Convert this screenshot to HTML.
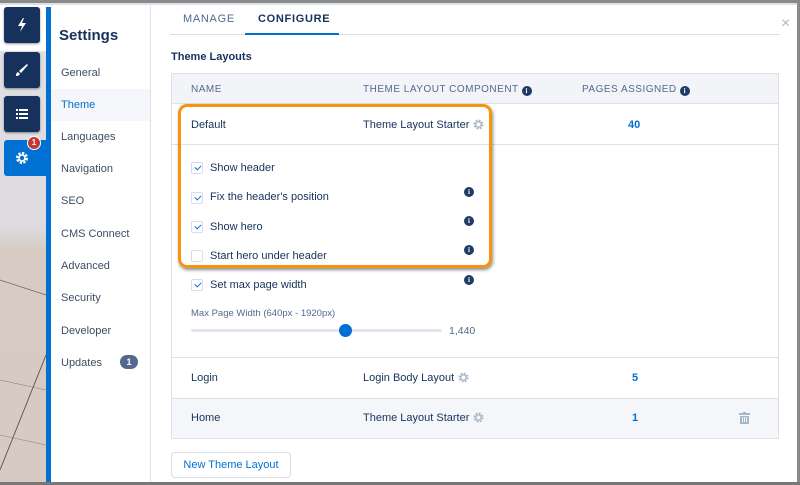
<!DOCTYPE html>
<html><head><style>
*{margin:0;padding:0;box-sizing:border-box}
body{width:800px;height:485px;overflow:hidden;background:#fff;font-family:"Liberation Sans",sans-serif;position:relative;color:#16325c}
.abs{position:absolute}
.lb{left:0;top:0;width:46px;height:485px;background:linear-gradient(#fff 0,#fff 50px,#e0dfe3 52px,#dddbe0 228px,#d7cbc3 250px,#d6cac2 485px)}
.rail{position:absolute;left:4px;width:36px;height:36px;border-radius:3px;background:#16325c;box-shadow:0 1px 2px rgba(0,0,0,.4)}
.rail svg{position:absolute;left:10px;top:10px}
.nav{left:51px;top:5px;width:100px;height:478px;background:#fff;border-right:1px solid #dde2ea}
.nav div{position:absolute;left:10px;font-size:11px;color:#3e4d63}
.main{left:152px;top:5px;width:645px;height:478px;background:#fff}
.th{font-size:10px;letter-spacing:.5px;color:#54698d}
.i{display:inline-block;width:10px;height:10px;border-radius:50%;background:#1f3b66;color:#fff;font-size:7px;line-height:10px;text-align:center;font-weight:bold;vertical-align:-1px;font-family:"Liberation Serif",serif}
.cb{position:absolute;width:12px;height:12px;border:1px solid #d8dde6;border-radius:2px;background:#fff}
.cb:after{content:"";position:absolute;left:3px;top:2px;width:5px;height:3px;border-left:1.5px solid #0070d2;border-bottom:1.5px solid #0070d2;transform:rotate(-45deg)}
.cb.n:after{display:none}
.t{position:absolute;font-size:11px;color:#16325c}
.g{vertical-align:-2px;margin-left:4px}
</style></head><body>
<div class="abs lb"></div>
<svg class="abs" style="left:0;top:230px" width="46" height="255"><line x1="0" y1="50" x2="46" y2="65" stroke="#6b6460" stroke-width=".8"/><line x1="0" y1="150" x2="46" y2="160" stroke="#8a807a" stroke-width=".6"/><line x1="0" y1="205" x2="46" y2="215" stroke="#8a807a" stroke-width=".6"/><line x1="46" y1="125" x2="0" y2="240" stroke="#5a534f" stroke-width=".9"/></svg>
<div class="abs" style="left:0;top:0;width:800px;height:3px;background:#8a8a8a"></div>
<div class="abs" style="left:0;top:3px;width:800px;height:2px;background:#dde2ea"></div>
<div class="abs" style="left:797px;top:0;width:3px;height:485px;background:#8a8a8a"></div>
<div class="abs" style="left:46px;top:7px;width:5px;height:476px;background:#0070d2"></div>
<div class="rail" style="top:7px"><svg width="16" height="16"><path d="M9 1L4 9h4l-2 6 6-9H8l2-5z" fill="#fff"/></svg></div>
<div class="rail" style="top:52px"><svg width="16" height="16"><path d="M13 2l1 1-7 8-2-2z M4 10l2 2c-1 2-3 2-4 2 0-1 0-3 2-4z" fill="#fff"/></svg></div>
<div class="rail" style="top:96px"><svg width="16" height="16"><g fill="#fff"><rect x="2" y="3" width="2" height="2"/><rect x="5" y="3" width="9" height="2"/><rect x="2" y="7" width="2" height="2"/><rect x="5" y="7" width="9" height="2"/><rect x="2" y="11" width="2" height="2"/><rect x="5" y="11" width="9" height="2"/></g></svg></div>
<div class="rail" style="top:140px;width:42px;height:36px;background:#0070d2;border-radius:3px 0 0 3px;box-shadow:none"><svg width="16" height="16"><circle cx="8" cy="8" r="4.5" fill="none" stroke="#fff" stroke-width="3" stroke-dasharray="2.2 1.3"/><circle cx="8" cy="8" r="3" fill="none" stroke="#fff" stroke-width="1.6"/></svg></div>
<div class="abs" style="left:27px;top:136px;width:14px;height:14px;border-radius:50%;background:#c23934;color:#fff;font-size:8px;font-weight:bold;text-align:center;line-height:12px;border:1px solid #fff">1</div>
<div class="abs nav">
<div style="top:22px;left:8px;font-size:15px;font-weight:bold;color:#16325c">Settings</div>
<div style="top:62px">General</div>
<div style="left:0;top:84px;width:99px;height:32px;background:#f4f6f9"></div>
<div style="top:94px;color:#0070d2">Theme</div>
<div style="top:126px">Languages</div>
<div style="top:158px">Navigation</div>
<div style="top:190px">SEO</div>
<div style="top:223px">CMS Connect</div>
<div style="top:255px">Advanced</div>
<div style="top:287px">Security</div>
<div style="top:320px">Developer</div>
<div style="top:352px">Updates</div>
<div style="left:69px;top:350px;width:18px;height:14px;border-radius:7px;background:#54698d;color:#fff;font-size:9px;font-weight:bold;text-align:center;line-height:14px">1</div>
</div>
<div class="abs main"></div>
<div class="abs" style="left:0;top:482px;width:800px;height:3px;background:#777"></div>
<div class="abs" style="left:170px;top:34px;width:610px;height:1px;background:#d8dde6"></div>
<div class="abs" style="left:245px;top:33px;width:94px;height:2px;background:#0070d2"></div>
<div class="abs" style="left:183px;top:13px;font-size:11px;letter-spacing:.7px;color:#54698d">MANAGE</div>
<div class="abs" style="left:258px;top:13px;font-size:11px;letter-spacing:.7px;color:#16325c;font-weight:bold">CONFIGURE</div>
<div class="abs" style="left:781px;top:15px;font-size:16px;color:#a8b7c7">×</div>
<div class="abs" style="left:171px;top:51px;font-size:11px;font-weight:bold;color:#16325c">Theme Layouts</div>
<div class="abs" style="left:171px;top:73px;width:608px;height:366px;border:1px solid #dde2ea"></div>
<div class="abs" style="left:172px;top:74px;width:606px;height:30px;background:#f3f4f7;border-bottom:1px solid #dde2ea"></div>
<div class="abs th" style="left:191px;top:84px">NAME</div>
<div class="abs th" style="left:363px;top:84px">THEME LAYOUT COMPONENT <span class="i">i</span></div>
<div class="abs th" style="left:582px;top:84px">PAGES ASSIGNED <span class="i">i</span></div>
<div class="t" style="left:191px;top:119px">Default</div>
<div class="t" style="left:363px;top:119px">Theme Layout Starter<svg class="g" width="11" height="11" viewBox="0 0 11 11"><circle cx="5.5" cy="5.5" r="3.8" fill="none" stroke="#a8b7c7" stroke-width="2.4" stroke-dasharray="1.8 1.2"/><circle cx="5.5" cy="5.5" r="2.6" fill="none" stroke="#a8b7c7" stroke-width="1.2"/></svg></div>
<div class="t" style="left:628px;top:119px;color:#0070d2;font-weight:bold">40</div>
<div class="abs" style="left:172px;top:144px;width:606px;height:1px;background:#dde2ea"></div>
<div class="cb" style="left:191px;top:162px"></div><div class="t" style="left:210px;top:162px">Show header</div>
<div class="cb" style="left:191px;top:192px"></div><div class="t" style="left:210px;top:191px">Fix the header's position</div>
<div class="cb" style="left:191px;top:221px"></div><div class="t" style="left:210px;top:221px">Show hero</div>
<div class="cb n" style="left:191px;top:250px"></div><div class="t" style="left:210px;top:250px">Start hero under header</div>
<div class="cb" style="left:191px;top:279px"></div><div class="t" style="left:210px;top:279px">Set max page width</div>
<span class="i abs" style="left:464px;top:187px">i</span><span class="i abs" style="left:464px;top:216px">i</span><span class="i abs" style="left:464px;top:245px">i</span><span class="i abs" style="left:464px;top:275px">i</span>
<div class="t" style="left:191px;top:308px;font-size:9.5px;color:#54698d">Max Page Width (640px - 1920px)</div>
<div class="abs" style="left:191px;top:329px;width:251px;height:3px;border-radius:2px;background:#dfe6ef"></div>
<div class="abs" style="left:339px;top:324px;width:13px;height:13px;border-radius:50%;background:#0070d2"></div>
<div class="t" style="left:449px;top:325px;font-size:10.5px;color:#54698d">1,440</div>
<div class="abs" style="left:178px;top:104px;width:314px;height:164px;border:3px solid #f7930e;border-radius:9px;box-shadow:1px 2px 3px rgba(0,0,0,.45)"></div>
<div class="abs" style="left:172px;top:357px;width:606px;height:1px;background:#dde2ea"></div>
<div class="t" style="left:191px;top:372px">Login</div>
<div class="t" style="left:363px;top:372px">Login Body Layout<svg class="g" width="11" height="11" viewBox="0 0 11 11"><circle cx="5.5" cy="5.5" r="3.8" fill="none" stroke="#a8b7c7" stroke-width="2.4" stroke-dasharray="1.8 1.2"/><circle cx="5.5" cy="5.5" r="2.6" fill="none" stroke="#a8b7c7" stroke-width="1.2"/></svg></div>
<div class="t" style="left:632px;top:372px;color:#0070d2;font-weight:bold">5</div>
<div class="abs" style="left:172px;top:398px;width:606px;height:40px;background:#f4f6f9;border-top:1px solid #dde2ea"></div>
<div class="t" style="left:191px;top:412px">Home</div>
<div class="t" style="left:363px;top:412px">Theme Layout Starter<svg class="g" width="11" height="11" viewBox="0 0 11 11"><circle cx="5.5" cy="5.5" r="3.8" fill="none" stroke="#a8b7c7" stroke-width="2.4" stroke-dasharray="1.8 1.2"/><circle cx="5.5" cy="5.5" r="2.6" fill="none" stroke="#a8b7c7" stroke-width="1.2"/></svg></div>
<div class="t" style="left:632px;top:412px;color:#0070d2;font-weight:bold">1</div>
<svg class="abs" style="left:739px;top:412px" width="11" height="12"><g fill="#a8b7c7"><rect x="0" y="1" width="11" height="2"/><rect x="4" y="0" width="3" height="1"/><path d="M1 4h9v8H1z"/></g><g fill="#f4f6f9"><rect x="3" y="5" width="1" height="5"/><rect x="5" y="5" width="1" height="5"/><rect x="7" y="5" width="1" height="5"/></g></svg>
<div class="abs" style="left:171px;top:452px;width:120px;height:26px;border:1px solid #d8dde6;border-radius:4px;font-size:11px;color:#0070d2;text-align:center;line-height:24px">New Theme Layout</div>
</body></html>
